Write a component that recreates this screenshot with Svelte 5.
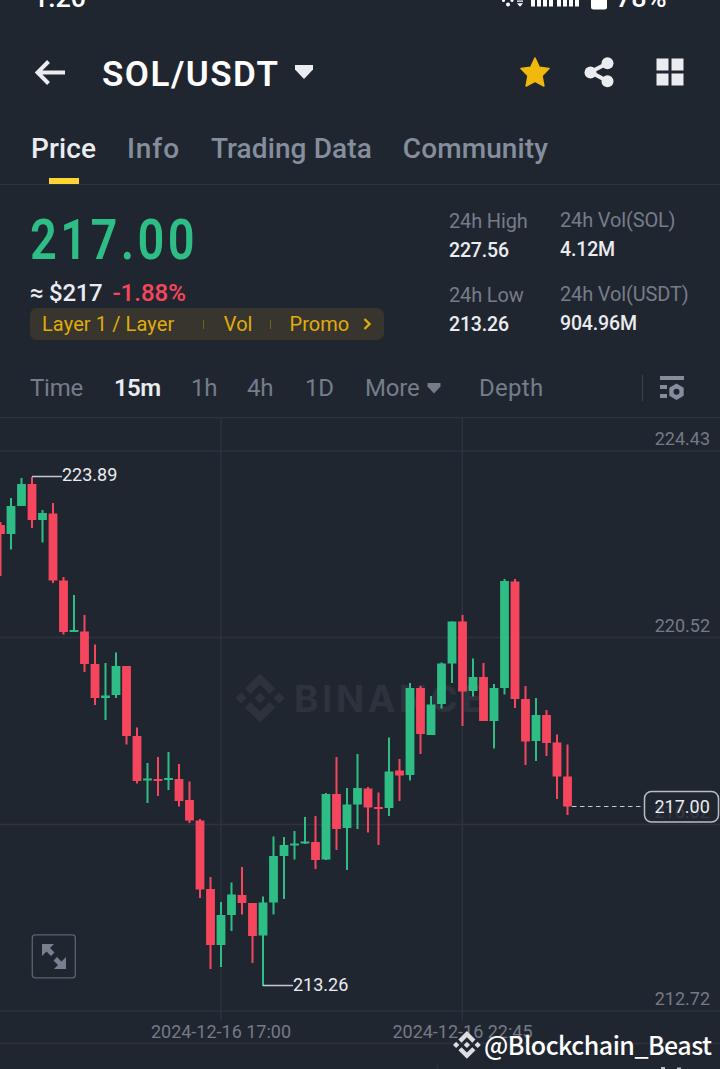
<script lang="ts">
    type Candle = {
        high: number;
        top: number;
        bottom: number;
        low: number;
        up: boolean;
    };

    const tabs = ["Price", "Info", "Trading Data", "Community"];
    const stats = [
        { label: "24h High", value: "227.56" },
        { label: "24h Vol(SOL)", value: "4.12M" },
        { label: "24h Low", value: "213.26" },
        { label: "24h Vol(USDT)", value: "904.96M" },
    ];
    const intervals = ["Time", "15m", "1h", "4h", "1D", "More", "Depth"];

    let activeTab = $state("Price");
    let activeInterval = $state("15m");

    // high, body top, body bottom, low, 1 = up / 0 = down
    const rows = [
        [522, 525, 534, 576, 0],
        [498, 506, 534, 549.5, 1],
        [478, 484, 506, 506, 1],
        [477, 484, 520, 528, 0],
        [510, 513, 520, 542.5, 1],
        [503, 513.5, 580.5, 583, 0],
        [577, 580.5, 632, 634.5, 0],
        [595, 630, 632, 632, 1],
        [615, 631.5, 664, 672, 0],
        [644.5, 664, 698, 705, 0],
        [663, 695.5, 698, 720, 1],
        [652.5, 666, 695, 698, 1],
        [666, 666, 736, 744.5, 0],
        [727.5, 736, 781, 783.5, 0],
        [763, 778.5, 780.5, 803, 1],
        [757, 779, 781, 796, 0],
        [752, 778, 780, 790, 1],
        [764, 779, 801, 806.5, 0],
        [781.5, 800, 820.5, 823, 0],
        [819, 820.5, 889.5, 898, 0],
        [877, 889, 945, 969, 0],
        [902, 915, 945, 967, 1],
        [882.5, 894.5, 915, 931, 1],
        [867, 895, 903, 914.5, 0],
        [903, 903, 936, 963, 0],
        [896.5, 902.5, 935.5, 986, 1],
        [836.5, 856, 902.5, 914.5, 1],
        [837, 845, 856, 899, 1],
        [831, 843.5, 845.5, 859.5, 1],
        [817, 841.5, 843.5, 844, 1],
        [816, 842, 860, 869, 0],
        [793, 794, 859.5, 860, 1],
        [757, 794, 829, 850, 0],
        [788, 804.5, 828, 870, 1],
        [754, 788, 804.5, 829, 1],
        [787, 788.5, 807.5, 832.5, 0],
        [792.5, 807, 809, 845, 0],
        [737.5, 771.5, 808, 816, 1],
        [759, 770.5, 775.5, 801, 0],
        [683, 688, 775, 780.5, 1],
        [686, 688, 734, 754, 0],
        [696, 704.5, 735, 735, 1],
        [662.5, 663.5, 704, 708.5, 1],
        [621.5, 621.5, 663.5, 683, 1],
        [615, 621.5, 691.5, 726, 0],
        [658.5, 677, 691, 696.5, 1],
        [663, 677, 721, 721, 0],
        [684, 688, 721, 748.5, 1],
        [579, 581, 688, 694.5, 1],
        [579, 581.5, 699, 708, 0],
        [686, 699, 741.5, 765, 0],
        [698, 715, 741, 761, 1],
        [710, 715, 743, 756, 0],
        [734.5, 742.5, 776.5, 799, 0],
        [744.5, 776.5, 806.5, 815, 0],
    ];

    const candles: Candle[] = rows.map(([high, top, bottom, low, up]) => ({
        high, top, bottom, low, up: up === 1,
    }));

    const step = 10.5;
    function candleX(index: number) {
        return 0.5 + index * step;
    }
</script>

{#snippet logo()}
    <path d="M16.624 13.92l2.7175 2.7155-7.353 7.353-7.353-7.352 2.7175-2.7165 4.6355 4.6595zM21.26 9.284L24 12l-2.7154 2.7164L18.568 12zM11.9885 9.285l2.7163 2.6914-2.7164 2.7174L9.272 12zM2.7164 9.284L5.4088 12l-2.6914 2.6924L0 12zM11.9885.0115l7.353 7.329-2.7174 2.7154-4.6356-4.6356-4.6355 4.6595-2.7174-2.7154z" />
{/snippet}

<div class="screen">
    <div class="status">
        <span class="clock">1:20</span>
        <svg class="signals" width="108" height="10" viewBox="0 0 108 10">
            <circle cx="3.5" cy="0.5" r="1.5" />
            <circle cx="8" cy="4.5" r="2" />
            <circle cx="12" cy="0.5" r="1.5" />
            <path d="M17 0.5h6v1.2h-6zM17 3.3h6l-3 3.5z" />
            {#each [31, 37, 43, 49, 57, 63, 69, 75] as x}
                <rect {x} y="0" width="4" height="6.5" />
            {/each}
            <path d="M91 0h16v7q0 2.500-2.500 2.500h-11q-2.500 0-2.500-2.500z" />
        </svg>
        <span class="battery">78%</span>
    </div>

    <header>
        <svg class="back" width="31" height="25" viewBox="0 0 31 25">
            <path d="M30 12.500H3M13.500 1.500L2.500 12.500l11 11" />
        </svg>
        <h1>SOL/USDT</h1>
        <svg class="caret" width="20" height="15" viewBox="0 0 20 15">
            <path d="M1 0h18v4.500L10 14 1 4.500z" />
        </svg>
        <svg class="star" width="32" height="32" viewBox="0 0 32 32">
            <path d="M16 2l4.300 9.300 9.700 1.200-7 7.300 1.900 10.200L16 25.300 7.100 30 9 19.800 2 12.500l9.700-1.200z" />
        </svg>
        <svg class="share" width="30" height="32" viewBox="0 0 30 32">
            <path d="M6.500 16L24 7M6.500 16L24 25.500" />
            <circle cx="6.500" cy="16.500" r="6" />
            <circle cx="23.500" cy="7.300" r="6" />
            <circle cx="23.500" cy="25.300" r="6" />
        </svg>
        <svg class="grid-icon" width="28" height="28" viewBox="0 0 28 28">
            <path d="M0.500 0.500h12v12h-12zM15.500 0.500h12v12h-12zM0.500 15.500h12v12h-12zM15.500 15.500h12v12h-12z" />
        </svg>
    </header>

    <nav>
        {#each tabs as tab}
            <button class:active={activeTab == tab} onclick={() => (activeTab = tab)}>{tab}</button>
        {/each}
    </nav>

    <section class="summary">
        <div class="quote">
            <div class="price">217.00</div>
            <div class="change">
                <span class="fiat">≈ $217</span>
                <span class="down">-1.88%</span>
            </div>
            <div class="tags">
                <span class="tag-layer">Layer 1 / Layer</span>
                <i></i>
                <span class="tag-vol">Vol</span>
                <i></i>
                <span class="tag-promo">Promo</span>
                <svg width="9" height="12" viewBox="0 0 9 12"><path d="M1.500 1l5 5-5 5" /></svg>
            </div>
        </div>
        <div class="stats">
            {#each stats as stat}
                <div class="stat">
                    <div class="label">{stat.label}</div>
                    <div class="value">{stat.value}</div>
                </div>
            {/each}
        </div>
    </section>

    <div class="intervals">
        <div class="choices">
            {#each intervals as interval}
                <button class:active={activeInterval == interval} onclick={() => (activeInterval = interval)}>
                    {interval}
                    {#if interval == "More"}
                        <svg width="14" height="11" viewBox="0 0 14 11"><path d="M0.500 0h13v3.500L7 10.500 0.500 3.500z" /></svg>
                    {/if}
                </button>
            {/each}
        </div>
        <svg class="settings" width="26" height="26" viewBox="0 0 26 26">
            <path d="M1 1h24v4H1zM1 10h7v4H1zM1 19h7v4H1z" />
            <path fill-rule="evenodd" d="M17.500 8.500l7.200 4.200v8l-7.200 4.200-7.200-4.200v-8zM17.500 13.700a3 3 0 1 0 0 6 3 3 0 1 0 0-6z" />
        </svg>
    </div>

    <svg class="chart" width="720" height="652" viewBox="0 417 720 652">
        <g class="grid">
            {#each [417.5, 451, 637.5, 824.5, 1011, 1043.5] as y}
                <line x1="0" x2="720" y1={y} y2={y} />
            {/each}
            {#each [221, 462.3] as x}
                <line x1={x} x2={x} y1="417" y2="1021" />
            {/each}
            <line x1="437.500" x2="437.500" y1="1065" y2="1069" />
        </g>

        <g class="brand">
            <g transform="translate(235.500 673.500) scale(2.050)">{@render logo()}</g>
            <text x="294" y="712" textLength="190">BINANCE</text>
        </g>

        {#each candles as candle, index}
            <g class={candle.up ? "up" : "fall"}>
                <rect x={candleX(index) - 1} y={candle.high} width="2" height={candle.low - candle.high} />
                <rect x={candleX(index) - 4.4} y={candle.top} width="8.800" height={candle.bottom - candle.top} />
            </g>
        {/each}

        <g class="axis">
            <text x="710" y="445" text-anchor="end">224.43</text>
            <text x="710" y="632" text-anchor="end">220.52</text>
            <text x="710" y="1005" text-anchor="end">212.72</text>
            <text x="221" y="1038" text-anchor="middle">2024-12-16 17:00</text>
            <text x="462.500" y="1038" text-anchor="middle">2024-12-16 22:45</text>
        </g>

        <g class="marks">
            <path d="M32 476.500h30M263 985.500h30" />
            <text x="62" y="481">223.89</text>
            <text x="293" y="991">213.26</text>
            <path class="dash" d="M572 806.500h70" />
            <rect x="644.500" y="791.500" width="74" height="30.500" rx="7" />
            <text class="ghost" x="654.500" y="818">216.62</text>
            <text x="654.500" y="813">217.00</text>
        </g>

        <g class="expand">
            <rect x="32.300" y="934.800" width="43" height="43" rx="3" />
            <path d="M42 944h12l-4 4 4.500 4.500-3.500 3.500-4.500-4.500L42 956zM66 969H54l4-4-4.500-4.500 3.500-3.500 4.500 4.500L66 957z" />
        </g>

        <g class="handle">
            <g transform="translate(453 1031) scale(1.160)">{@render logo()}</g>
            <text x="484" y="1054.500" textLength="228">@Blockchain_Beast</text>
        </g>
        <path class="scrap" d="M661 1067h4v2h-4zM677 1067.500h4v1.500h-4z" />
    </svg>
</div>

<style>
    :global(body) {
        margin: 0;
        background: #202630;
    }
    .screen {
        width: 720px;
        height: 1069px;
        overflow: hidden;
        background: #202630;
        color: #eaecef;
        font-family: Roboto, "Liberation Sans", sans-serif;
    }
    svg {
        display: block;
        flex: none;
    }
    button {
        padding: 0;
        border: 0;
        background: none;
        color: inherit;
        font: inherit;
        letter-spacing: inherit;
        white-space: nowrap;
    }

    .status {
        display: flex;
        align-items: flex-end;
        box-sizing: border-box;
        height: 12px;
        padding: 0 0 1px 33px;
        overflow: hidden;
        font-size: 27px;
        line-height: 26px;
        font-weight: 500;
        color: #fff;
    }
    .clock {
        width: 467px;
    }
    .signals {
        align-self: flex-start;
        fill: #fff;
    }
    .battery {
        margin-left: 8px;
    }

    header {
        display: flex;
        align-items: center;
        height: 120px;
        padding: 0 36px 0 35px;
    }
    .back {
        fill: none;
        stroke: #eaecef;
        stroke-width: 4;
    }
    h1 {
        width: 178px;
        margin: 6px 0 0 36px;
        font-size: 35px;
        line-height: 40px;
        font-weight: 600;
        letter-spacing: 1.5px;
        color: #fff;
    }
    .caret {
        margin-left: 14px;
        fill: #eaecef;
    }
    .star {
        margin-left: auto;
        fill: #f0b90b;
        stroke: #f0b90b;
        stroke-width: 1.5;
        stroke-linejoin: round;
    }
    .share {
        margin-left: 33px;
        fill: #eaecef;
        stroke: none;
    }
    .share path {
        stroke: #eaecef;
        stroke-width: 4;
    }
    .grid-icon {
        margin-left: 42px;
        fill: #eaecef;
    }

    nav {
        display: flex;
        gap: 31px;
        height: 52px;
        padding-left: 31px;
        border-bottom: 1px solid #2e343f;
        font-size: 28px;
        font-weight: 500;
        letter-spacing: 0.1px;
        color: #848e9c;
    }
    nav button {
        display: flex;
        flex-direction: column;
        align-items: center;
        line-height: 33px;
    }
    nav button:nth-child(2) {
        letter-spacing: 0.9px;
    }
    nav .active {
        color: #eaecef;
    }
    nav .active::after {
        content: "";
        width: 30px;
        height: 6px;
        margin-top: 13px;
        background: #fcd535;
    }

    .summary {
        display: flex;
        height: 174px;
        padding-left: 30px;
    }
    .quote {
        width: 354px;
        padding-top: 24px;
    }
    /* condensed, widely spaced digits */
    .price {
        width: 200px;
        height: 60px;
        font-size: 56px;
        line-height: 62px;
        font-weight: 600;
        letter-spacing: 4px;
        transform: scaleX(0.84);
        transform-origin: left;
        color: #2ebd85;
    }
    .change {
        display: flex;
        gap: 10px;
        padding-top: 9px;
        height: 30px;
        font-size: 24px;
        line-height: 30px;
        font-weight: 500;
    }
    .fiat {
        letter-spacing: -0.3px;
    }
    .down {
        color: #f6465d;
    }
    .tags {
        display: flex;
        align-items: center;
        height: 32px;
        padding: 0 12px;
        box-sizing: border-box;
        border-radius: 7px;
        background: #37352d;
        font-size: 20px;
        color: #e0ac0b;
    }
    .tags i {
        width: 1px;
        height: 9px;
        background: #75601f;
    }
    .tag-layer {
        width: 162px;
        letter-spacing: 0.1px;
    }
    .tag-vol {
        width: 46px;
        padding-left: 20px;
    }
    .tag-promo {
        width: 74px;
        padding-left: 19px;
    }
    .tags svg {
        fill: none;
        stroke: #e0ac0b;
        stroke-width: 2.4;
    }

    .stats {
        display: grid;
        grid-template-columns: 111px 160px;
        grid-template-rows: 74px 74px;
        margin-left: 65px;
        padding-top: 24px;
        font-size: 20px;
        line-height: 24px;
        letter-spacing: -0.15px;
    }
    .stat:nth-child(even) {
        margin-top: -1px;
    }
    .label {
        color: #747d8a;
    }
    .value {
        margin-top: 6px;
        font-size: 19.5px;
        font-weight: 500;
    }

    .intervals {
        display: flex;
        align-items: center;
        height: 58px;
        padding: 0 35px 0 30px;
        font-size: 24px;
        color: #747d8a;
    }
    .choices {
        display: grid;
        grid-template-columns: 84px 77px 56px 58px 60px 114px 70px;
    }
    .intervals button {
        display: flex;
        align-items: center;
        gap: 8px;
        letter-spacing: -0.2px;
    }
    .intervals button:last-child {
        letter-spacing: 0.3px;
    }
    .intervals .active {
        color: #eaecef;
        font-weight: 600;
        letter-spacing: -0.6px;
    }
    .intervals button svg {
        fill: #747d8a;
    }
    .settings {
        margin-left: auto;
        padding-left: 16px;
        border-left: 1px solid #3a414c;
        fill: #848e9c;
    }

    .grid line {
        stroke: #2d333e;
        stroke-width: 1.5;
    }
    .brand {
        fill: #2d323d;
        font: 700 37px Inter, sans-serif;
    }
    .up {
        fill: #2ebd85;
    }
    .fall {
        fill: #f6465d;
    }
    .axis {
        fill: #747a86;
        font-size: 18px;
    }
    .marks {
        fill: #eaecef;
        font-size: 18px;
    }
    .marks path {
        fill: none;
        stroke: #c4c8cf;
        stroke-width: 1.5;
    }
    .marks .dash {
        stroke-width: 1.2;
        stroke-dasharray: 4.5 3.5;
    }
    .marks rect {
        fill: #202630;
        stroke: #b7bdc6;
        stroke-width: 1.5;
    }
    .marks .ghost {
        fill: #333a45;
    }
    .expand rect {
        fill: none;
        stroke: #5b6370;
        stroke-width: 1.3;
    }
    .expand path {
        fill: #76808e;
    }
    .handle {
        fill: #fff;
        font: 500 25px "Noto Sans CJK SC", sans-serif;
    }
    .handle g {
        fill: #dcdee1;
    }
    .scrap {
        fill: #b7bdc6;
    }
</style>
